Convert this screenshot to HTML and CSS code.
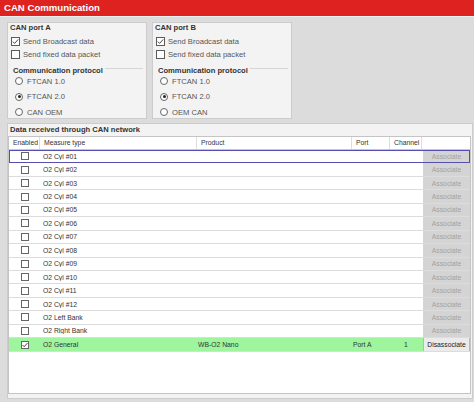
FILE: index.html
```html
<!DOCTYPE html>
<html lang="en">
<head>
    <meta charset="UTF-8">
    <title>CAN Communication</title>
    <link rel="stylesheet" href="styles.css">
</head>
<body>
    <div class="titlebar">CAN Communication</div>
    <div class="ports">
        <div class="group">
            <div class="group-title">CAN port A</div>
            <div class="check"><span class="cb checked"><svg width="9" height="9" viewBox="0 0 9 9"><path d="M1.8 4.6 L3.6 6.4 L7.2 2.4" fill="none" stroke="#444" stroke-width="1"/></svg></span>Send Broadcast data</div>
            <div class="check"><span class="cb"></span>Send fixed data packet</div>
            <div class="subgroup">
                <div class="subgroup-title"><span>Communication protocol</span><span class="rule"></span></div>
                <div class="radio"><span class="rb"></span>FTCAN 1.0</div>
                <div class="radio"><span class="rb on"></span>FTCAN 2.0</div>
                <div class="radio"><span class="rb"></span>CAN OEM</div>
            </div>
        </div>
        <div class="group">
            <div class="group-title">CAN port B</div>
            <div class="check"><span class="cb checked"><svg width="9" height="9" viewBox="0 0 9 9"><path d="M1.8 4.6 L3.6 6.4 L7.2 2.4" fill="none" stroke="#444" stroke-width="1"/></svg></span>Send Broadcast data</div>
            <div class="check"><span class="cb"></span>Send fixed data packet</div>
            <div class="subgroup">
                <div class="subgroup-title"><span>Communication protocol</span><span class="rule"></span></div>
                <div class="radio"><span class="rb"></span>FTCAN 1.0</div>
                <div class="radio"><span class="rb on"></span>FTCAN 2.0</div>
                <div class="radio"><span class="rb"></span>OEM CAN</div>
            </div>
        </div>
    </div>

    <div class="data-panel">
        <div class="panel-title">Data received through CAN network</div>
        <div class="table">
            <div class="row head">
                <div class="cell">Enabled</div>
                <div class="cell">Measure type</div>
                <div class="cell">Product</div>
                <div class="cell">Port</div>
                <div class="cell">Channel</div>
                <div class="cell"></div>
            </div>
            <div class="row selected">
                <div class="cell center"><span class="cb small"></span></div>
                <div class="cell">O2 Cyl #01</div>
                <div class="cell"></div><div class="cell"></div><div class="cell"></div>
                <div class="cell btn-cell"><span class="btn">Associate</span></div>
            </div>
            <div class="row">
                <div class="cell center"><span class="cb small"></span></div>
                <div class="cell">O2 Cyl #02</div>
                <div class="cell"></div><div class="cell"></div><div class="cell"></div>
                <div class="cell btn-cell"><span class="btn">Associate</span></div>
            </div>
            <div class="row">
                <div class="cell center"><span class="cb small"></span></div>
                <div class="cell">O2 Cyl #03</div>
                <div class="cell"></div><div class="cell"></div><div class="cell"></div>
                <div class="cell btn-cell"><span class="btn">Associate</span></div>
            </div>
            <div class="row">
                <div class="cell center"><span class="cb small"></span></div>
                <div class="cell">O2 Cyl #04</div>
                <div class="cell"></div><div class="cell"></div><div class="cell"></div>
                <div class="cell btn-cell"><span class="btn">Associate</span></div>
            </div>
            <div class="row">
                <div class="cell center"><span class="cb small"></span></div>
                <div class="cell">O2 Cyl #05</div>
                <div class="cell"></div><div class="cell"></div><div class="cell"></div>
                <div class="cell btn-cell"><span class="btn">Associate</span></div>
            </div>
            <div class="row">
                <div class="cell center"><span class="cb small"></span></div>
                <div class="cell">O2 Cyl #06</div>
                <div class="cell"></div><div class="cell"></div><div class="cell"></div>
                <div class="cell btn-cell"><span class="btn">Associate</span></div>
            </div>
            <div class="row">
                <div class="cell center"><span class="cb small"></span></div>
                <div class="cell">O2 Cyl #07</div>
                <div class="cell"></div><div class="cell"></div><div class="cell"></div>
                <div class="cell btn-cell"><span class="btn">Associate</span></div>
            </div>
            <div class="row">
                <div class="cell center"><span class="cb small"></span></div>
                <div class="cell">O2 Cyl #08</div>
                <div class="cell"></div><div class="cell"></div><div class="cell"></div>
                <div class="cell btn-cell"><span class="btn">Associate</span></div>
            </div>
            <div class="row">
                <div class="cell center"><span class="cb small"></span></div>
                <div class="cell">O2 Cyl #09</div>
                <div class="cell"></div><div class="cell"></div><div class="cell"></div>
                <div class="cell btn-cell"><span class="btn">Associate</span></div>
            </div>
            <div class="row">
                <div class="cell center"><span class="cb small"></span></div>
                <div class="cell">O2 Cyl #10</div>
                <div class="cell"></div><div class="cell"></div><div class="cell"></div>
                <div class="cell btn-cell"><span class="btn">Associate</span></div>
            </div>
            <div class="row">
                <div class="cell center"><span class="cb small"></span></div>
                <div class="cell">O2 Cyl #11</div>
                <div class="cell"></div><div class="cell"></div><div class="cell"></div>
                <div class="cell btn-cell"><span class="btn">Associate</span></div>
            </div>
            <div class="row">
                <div class="cell center"><span class="cb small"></span></div>
                <div class="cell">O2 Cyl #12</div>
                <div class="cell"></div><div class="cell"></div><div class="cell"></div>
                <div class="cell btn-cell"><span class="btn">Associate</span></div>
            </div>
            <div class="row">
                <div class="cell center"><span class="cb small"></span></div>
                <div class="cell">O2 Left Bank</div>
                <div class="cell"></div><div class="cell"></div><div class="cell"></div>
                <div class="cell btn-cell"><span class="btn">Associate</span></div>
            </div>
            <div class="row">
                <div class="cell center"><span class="cb small"></span></div>
                <div class="cell">O2 Right Bank</div>
                <div class="cell"></div><div class="cell"></div><div class="cell"></div>
                <div class="cell btn-cell"><span class="btn">Associate</span></div>
            </div>
            <div class="row active">
                <div class="cell center"><span class="cb small checked"><svg width="8" height="8" viewBox="0 0 8 8"><path d="M1.5 4 L3.2 5.7 L6.5 2" fill="none" stroke="#444" stroke-width="1"/></svg></span></div>
                <div class="cell">O2 General</div>
                <div class="cell tight">WB-O2 Nano</div>
                <div class="cell tight">Port A</div>
                <div class="cell center">1</div>
                <div class="cell btn-cell"><span class="btn on">Disassociate</span></div>
            </div>
        </div>
    </div>
</body>
</html>
```

FILE: styles.css
```css
body {
    margin: 0;
    padding: 0;
    background-color: #dcdcdc;
    font-family: "Liberation Sans", Arial, sans-serif;
    color: #3a3a3a;
}
.titlebar {
    height: 16px;
    line-height: 16px;
    padding-left: 4px;
    background-color: #dd2220;
    color: #ffffff;
    font-weight: bold;
    font-size: 9.6px;
    border-bottom: 1px solid #f2f2f2;
}
.ports {
    display: flex;
    gap: 5px;
    padding: 5px 0 0 7px;
}
.group {
    width: 140px;
    height: 97px;
    box-sizing: border-box;
    background-color: #f3f3f3;
    border: 1px solid #cccccc;
    padding: 0 3px 0 1px;
    font-size: 7.6px;
    color: #555;
}
.group-title {
    height: 9px;
    line-height: 9px;
    padding-left: 1px;
    font-weight: bold;
    color: #333;
}
.check {
    display: flex;
    align-items: center;
    height: 13px;
    padding-left: 2px;
}
.group-title + .check {
    margin-top: 2.5px;
}
.cb {
    display: inline-block;
    width: 9px;
    height: 9px;
    box-sizing: border-box;
    border: 1px solid #5c5c5c;
    background: #ffffff;
    margin-right: 3px;
    position: relative;
}
.cb svg {
    position: absolute;
    left: -1px;
    top: -1px;
}
.cb.small {
    width: 8px;
    height: 8px;
    margin: 0;
    border-color: #666;
}
.subgroup {
    margin-top: 5px;
    padding-left: 4px;
}
.subgroup-title {
    display: flex;
    align-items: center;
    height: 9px;
    font-weight: bold;
    color: #333;
}
.subgroup-title .rule {
    flex: 1;
    height: 1px;
    margin-left: 2px;
    margin-top: -3px;
    background-color: #d6d6d6;
}
.radio {
    display: flex;
    align-items: center;
    height: 15.5px;
    padding-left: 2px;
}
.subgroup-title + .radio {
    margin-top: -1px;
}
.rb {
    display: inline-block;
    width: 8px;
    height: 8px;
    border: 1px solid #666;
    border-radius: 50%;
    background: #ffffff;
    margin-right: 4px;
    box-sizing: border-box;
    position: relative;
}
.rb.on::after {
    content: "";
    position: absolute;
    left: 1.5px;
    top: 1.5px;
    width: 3px;
    height: 3px;
    border-radius: 50%;
    background: #222;
}
.data-panel {
    margin: 4px 1px 0 7px;
    background-color: #f3f3f3;
    border: 1px solid #cccccc;
    padding-bottom: 4px;
}
.panel-title {
    height: 12px;
    line-height: 11px;
    padding-left: 2px;
    font-size: 7.6px;
    font-weight: bold;
    color: #333;
}
.table {
    margin-right: 1px;
    height: 258px;
    box-sizing: border-box;
    border: 1px solid #c4c4c4;
    background: #ffffff;
    font-size: 6.8px;
}
.row {
    display: grid;
    grid-template-columns: 31px 157px 155px 38px 32px 48px;
    height: 13.45px;
    box-sizing: border-box;
    border-bottom: 1px solid #dcdcdc;
    align-items: center;
    position: relative;
}
.row.head {
    height: 13px;
    border-bottom: 1px solid #c8c8c8;
    color: #444;
}
.row.head .cell {
    height: 100%;
    line-height: 12px;
    padding-left: 4px;
    border-right: 1px solid #dedede;
    box-sizing: border-box;
}
.row.head .cell:last-child {
    border-right: none;
}
.cell {
    padding-left: 3px;
    white-space: nowrap;
    overflow: hidden;
    color: #333;
}
.cell.tight {
    padding-left: 1px;
}
.cell.center {
    padding-left: 0;
    display: flex;
    justify-content: center;
    align-items: center;
}
.btn-cell {
    padding: 0;
    height: 100%;
    display: flex;
}
.btn {
    flex: 1;
    margin-left: 1px;
    background-color: #d4d4d4;
    color: #a2a2a2;
    display: flex;
    align-items: center;
    justify-content: center;
}
.btn.on {
    background-color: #ebebeb;
    color: #222;
    border: 1px solid #b8b8b8;
    margin-top: -1px;
    margin-bottom: -1px;
}
.row.selected {
    outline: 1px solid #5550b0;
    outline-offset: -1px;
}
.row.active {
    background-color: #9ef59e;
    height: 14px;
}
```
